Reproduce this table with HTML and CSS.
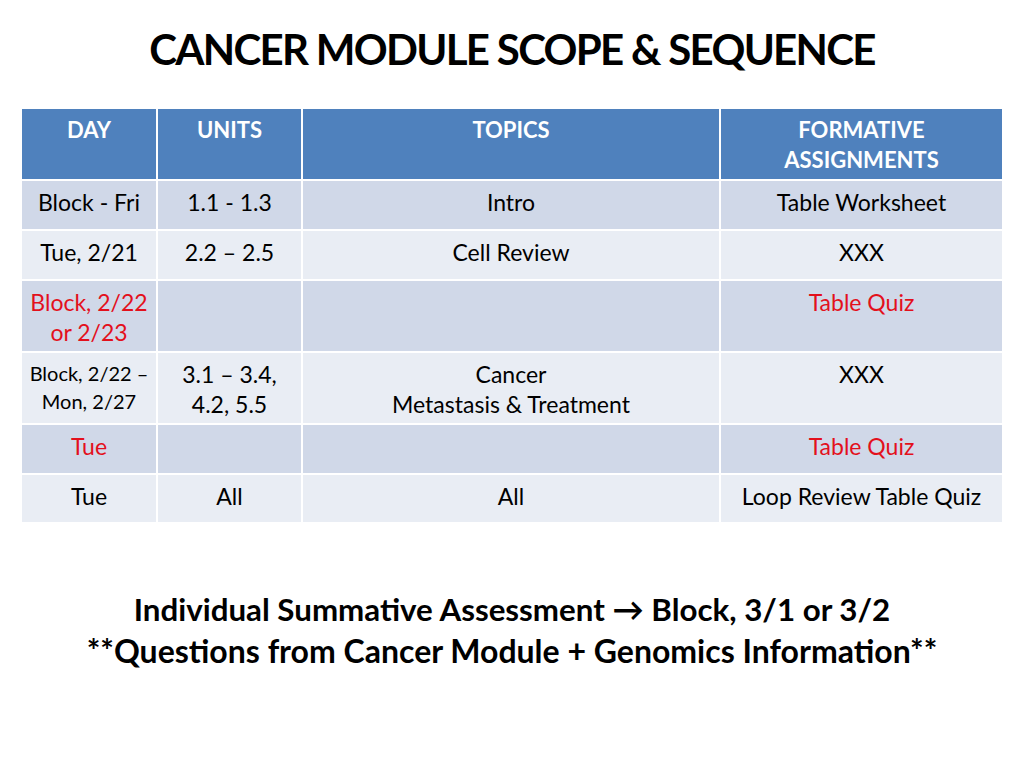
FILE: index.html
```html
<!DOCTYPE html>
<html>
<head>
<meta charset="utf-8">
<link rel="stylesheet" href="styles.css">
</head>
<body>
<div class="slide">
  <h1 class="title">CANCER MODULE SCOPE &amp; SEQUENCE</h1>
  <table class="grid">
    <colgroup>
      <col class="c1"><col class="c2"><col class="c3"><col class="c4">
    </colgroup>
    <thead>
      <tr class="head">
        <th>DAY</th><th>UNITS</th><th>TOPICS</th><th>FORMATIVE<br>ASSIGNMENTS</th>
      </tr>
    </thead>
    <tbody>
      <tr class="odd r50"><td>Block - Fri</td><td>1.1 - 1.3</td><td>Intro</td><td>Table Worksheet</td></tr>
      <tr class="even r50"><td>Tue, 2/21</td><td>2.2 – 2.5</td><td>Cell Review</td><td>XXX</td></tr>
      <tr class="odd r72"><td class="red">Block, 2/22<br>or 2/23</td><td></td><td></td><td class="red">Table Quiz</td></tr>
      <tr class="even r72"><td class="small">Block, 2/22 –<br>Mon, 2/27</td><td>3.1 – 3.4,<br>4.2, 5.5</td><td>Cancer<br>Metastasis &amp; Treatment</td><td>XXX</td></tr>
      <tr class="odd r50"><td class="red">Tue</td><td></td><td></td><td class="red">Table Quiz</td></tr>
      <tr class="even r48"><td>Tue</td><td>All</td><td>All</td><td>Loop Review Table Quiz</td></tr>
    </tbody>
  </table>
  <div class="summary">
    <p class="line1">Individual Summative Assessment → Block, 3/1 or 3/2</p>
    <p>**Questions from Cancer Module + Genomics Information**</p>
  </div>
</div>
</body>
</html>
```

FILE: styles.css
```css
html, body {
  margin: 0;
  padding: 0;
  background: #ffffff;
}
.slide {
  width: 1024px;
  height: 768px;
  font-family: Lato, "Open Sans", sans-serif;
  color: #000;
  overflow: hidden;
}
.title {
  margin: 0;
  padding-top: 24px;
  height: 109px;
  box-sizing: border-box;
  text-align: center;
  font-size: 42px;
  line-height: 50px;
  font-weight: 700;
  letter-spacing: -1.7px;
}
.grid {
  margin-left: 22px;
  width: 980px;
  border-collapse: collapse;
  table-layout: fixed;
  font-size: 23px;
}
.c1 { width: 135px; }
.c2 { width: 145px; }
.c3 { width: 418px; }
.c4 { width: 282px; }
.grid th, .grid td {
  border: 2px solid #ffffff;
  text-align: center;
  vertical-align: top;
  padding: 6px 2px 0;
  line-height: 30px;
  white-space: nowrap;
}
.grid tr:first-child th { border-top: none; }
.grid th:first-child, .grid td:first-child { border-left: none; }
.grid th:last-child, .grid td:last-child { border-right: none; }
.grid tbody tr:last-child td { border-bottom: none; }
.head th {
  background: #4f81bd;
  color: #ffffff;
  font-weight: 700;
  height: 71px;
  box-sizing: border-box;
  font-size: 22px;
}
.odd td { background: #d0d8e8; }
.even td { background: #e9edf4; }
.r50 td { height: 50px; box-sizing: border-box; }
.r48 td { height: 48px; box-sizing: border-box; }
.r72 td { height: 72px; box-sizing: border-box; }
.red { color: #e3101c; }
.grid td.small {
  font-size: 20px;
  line-height: 28px;
}
.summary {
  margin-top: 67px;
  text-align: center;
  font-weight: 700;
  font-size: 32px;
  line-height: 41px;
}
.summary p { margin: 0; }
.summary .line1 { font-size: 31.3px; }
```
